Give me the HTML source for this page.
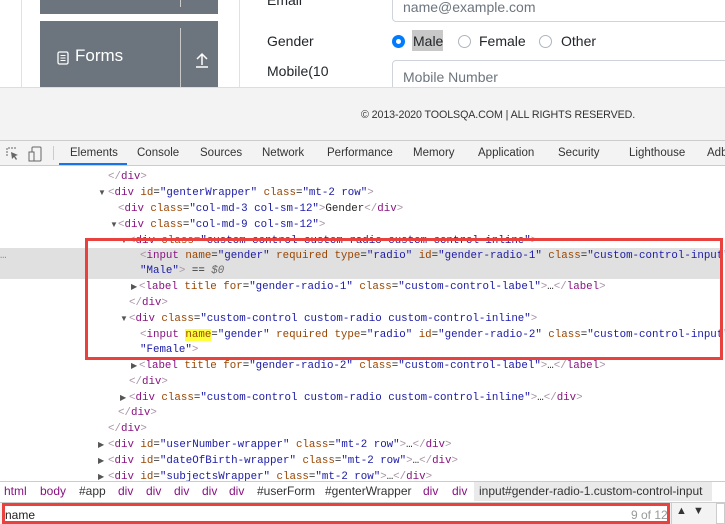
<!DOCTYPE html>
<html><head><meta charset="utf-8"><style>
*{margin:0;padding:0;box-sizing:border-box}
body{width:725px;height:524px;overflow:hidden;background:#fff;position:relative;font-family:"Liberation Sans",sans-serif}
.a{position:absolute;white-space:nowrap}
.code{font-family:"Liberation Mono",monospace;font-size:10.8px;color:#222;line-height:15.75px;margin-top:2px}
.t{color:#881280}.n{color:#994500}.v{color:#1a1aa6}.b{color:#a894a6}
.tri{font-size:8px;color:#555;margin-top:1px}
.tab{font-size:11.5px;color:#333;top:147px}
.bc{font-size:12px;top:484px}
.p{color:#881280}
</style></head><body>
<div class="a" style="left:21px;top:0;width:1px;height:87px;background:#dee2e6"></div>
<div class="a" style="left:239px;top:0;width:1px;height:87px;background:#dee2e6"></div>
<div class="a" style="left:40px;top:0;width:178px;height:14px;background:#6c757d"></div>
<div class="a" style="left:180px;top:0;width:1px;height:7px;background:#ccc"></div>
<div class="a" style="left:40px;top:21px;width:178px;height:66px;background:#6c757d"></div>
<div class="a" style="left:180px;top:28px;width:1px;height:59px;background:#c8c8c8"></div>
<svg class="a" style="left:57px;top:51px" width="12" height="14" viewBox="0 0 12 14"><rect x="1" y="1" width="10" height="12" rx="1.5" fill="none" stroke="#fff" stroke-width="1.3"/><path d="M3.5 4.5h5M3.5 7h5M3.5 9.5h5" stroke="#fff" stroke-width="1"/></svg>
<div class="a" style="left:75px;top:46px;font-size:17px;color:#fff">Forms</div>
<svg class="a" style="left:195px;top:52px" width="14" height="16" viewBox="0 0 14 16"><path d="M7 13V2M2 7l5-5 5 5M1 15h12" stroke="#fff" stroke-width="1.5" fill="none"/></svg>
<div class="a" style="left:392px;top:-10px;width:340px;height:32px;border:1px solid #ced4da;border-radius:4px"></div>
<div class="a" style="left:403px;top:-1px;font-size:14px;color:#6c757d">name@example.com</div>
<div class="a" style="left:267px;top:-8px;font-size:14px;color:#212529">Email</div>
<div class="a" style="left:267px;top:33px;font-size:14px;color:#212529">Gender</div>
<div class="a" style="left:392px;top:35px;width:13px;height:13px;border-radius:50%;background:#007bff"></div>
<div class="a" style="left:396px;top:39px;width:5px;height:5px;border-radius:50%;background:#fff"></div>
<div class="a" style="left:412px;top:30px;width:31px;height:21px;background:#c8c8c8"></div>
<div class="a" style="left:413px;top:33px;font-size:14px;color:#212529">Male</div>
<div class="a" style="left:458px;top:35px;width:13px;height:13px;border-radius:50%;border:1px solid #adb5bd"></div>
<div class="a" style="left:479px;top:33px;font-size:14px;color:#212529">Female</div>
<div class="a" style="left:539px;top:35px;width:13px;height:13px;border-radius:50%;border:1px solid #adb5bd"></div>
<div class="a" style="left:561px;top:33px;font-size:14px;color:#212529">Other</div>
<div class="a" style="left:267px;top:63px;font-size:14px;color:#212529">Mobile(10</div>
<div class="a" style="left:392px;top:60px;width:340px;height:38px;border:1px solid #ced4da;border-radius:4px"></div>
<div class="a" style="left:403px;top:69px;font-size:14px;color:#6c757d">Mobile Number</div>
<div class="a" style="left:0;top:87px;width:725px;height:54px;background:#f3f3f3;border-top:1px solid #ddd;border-bottom:1px solid #ccc"></div>
<div class="a" style="left:361px;top:109px;font-size:10.7px;color:#333;letter-spacing:-0.1px">© 2013-2020 TOOLSQA.COM | ALL RIGHTS RESERVED.</div>
<div class="a" style="left:0;top:141px;width:725px;height:25px;background:#f3f3f3;border-bottom:1px solid #ccc"></div>
<svg class="a" style="left:6px;top:147px" width="14" height="14" viewBox="0 0 14 14"><path d="M10 1H1v9" fill="none" stroke="#666" stroke-dasharray="2 1"/><path d="M5 5l7 3-3 1 2 3-1 1-2-3-2 2z" fill="#666"/></svg>
<svg class="a" style="left:28px;top:146px" width="14" height="16" viewBox="0 0 14 16"><rect x="4" y="1" width="9" height="14" rx="1" fill="none" stroke="#666"/><rect x="1" y="6" width="5" height="9" fill="#f3f3f3" stroke="#666"/></svg>
<div class="a" style="left:53px;top:146px;width:1px;height:14px;background:#ccc"></div>
<div class="a" style="left:59px;top:163px;width:68px;height:2px;background:#1a73e8"></div>
<div class="a tab" style="left:70px">Elements</div>
<div class="a tab" style="left:137px">Console</div>
<div class="a tab" style="left:200px">Sources</div>
<div class="a tab" style="left:262px">Network</div>
<div class="a tab" style="left:327px">Performance</div>
<div class="a tab" style="left:413px">Memory</div>
<div class="a tab" style="left:478px">Application</div>
<div class="a tab" style="left:558px">Security</div>
<div class="a tab" style="left:629px">Lighthouse</div>
<div class="a tab" style="left:707px">Adb</div>
<div class="a" style="left:0;top:248px;width:721px;height:31px;background:#e0e0e0"></div>
<div class="a code" style="left:0;top:247px;color:#888">…</div>
<div class="a code" style="left:108px;top:168px"><span class="b">&lt;/</span><span class="t">div</span><span class="b">&gt;</span></div>
<div class="a tri" style="left:98px;top:187px">▼</div>
<div class="a code" style="left:108px;top:184px"><span class="b">&lt;</span><span class="t">div</span> <span class="n">id</span>=<span class="v">"genterWrapper"</span> <span class="n">class</span>=<span class="v">"mt-2 row"</span><span class="b">&gt;</span></div>
<div class="a code" style="left:118px;top:200px"><span class="b">&lt;</span><span class="t">div</span> <span class="n">class</span>=<span class="v">"col-md-3 col-sm-12"</span><span class="b">&gt;</span>Gender<span class="b">&lt;/</span><span class="t">div</span><span class="b">&gt;</span></div>
<div class="a tri" style="left:110px;top:219px">▼</div>
<div class="a code" style="left:118px;top:216px"><span class="b">&lt;</span><span class="t">div</span> <span class="n">class</span>=<span class="v">"col-md-9 col-sm-12"</span><span class="b">&gt;</span></div>
<div class="a tri" style="left:120px;top:235px">▼</div>
<div class="a code" style="left:129px;top:232px"><span class="b">&lt;</span><span class="t">div</span> <span class="n">class</span>=<span class="v">"custom-control custom-radio custom-control-inline"</span><span class="b">&gt;</span></div>
<div class="a code" style="left:140px;top:247px"><span class="b">&lt;</span><span class="t">input</span> <span class="n">name</span>=<span class="v">"gender"</span> <span class="n">required</span> <span class="n">type</span>=<span class="v">"radio"</span> <span class="n">id</span>=<span class="v">"gender-radio-1"</span> <span class="n">class</span>=<span class="v">"custom-control-input"</span></div>
<div class="a code" style="left:140px;top:262px"><span class="v">"Male"</span><span class="b">&gt;</span> == <i style="color:#666">$0</i></div>
<div class="a tri" style="left:131px;top:281px">▶</div>
<div class="a code" style="left:139px;top:278px"><span class="b">&lt;</span><span class="t">label</span> <span class="n">title</span> <span class="n">for</span>=<span class="v">"gender-radio-1"</span> <span class="n">class</span>=<span class="v">"custom-control-label"</span><span class="b">&gt;</span>…<span class="b">&lt;/</span><span class="t">label</span><span class="b">&gt;</span></div>
<div class="a code" style="left:129px;top:294px"><span class="b">&lt;/</span><span class="t">div</span><span class="b">&gt;</span></div>
<div class="a tri" style="left:120px;top:313px">▼</div>
<div class="a code" style="left:129px;top:310px"><span class="b">&lt;</span><span class="t">div</span> <span class="n">class</span>=<span class="v">"custom-control custom-radio custom-control-inline"</span><span class="b">&gt;</span></div>
<div class="a code" style="left:140px;top:326px"><span class="b">&lt;</span><span class="t">input</span> <span class="n" style="background:#ffff3c">name</span>=<span class="v">"gender"</span> <span class="n">required</span> <span class="n">type</span>=<span class="v">"radio"</span> <span class="n">id</span>=<span class="v">"gender-radio-2"</span> <span class="n">class</span>=<span class="v">"custom-control-input"</span></div>
<div class="a code" style="left:140px;top:341px"><span class="v">"Female"</span><span class="b">&gt;</span></div>
<div class="a tri" style="left:131px;top:360px">▶</div>
<div class="a code" style="left:139px;top:357px"><span class="b">&lt;</span><span class="t">label</span> <span class="n">title</span> <span class="n">for</span>=<span class="v">"gender-radio-2"</span> <span class="n">class</span>=<span class="v">"custom-control-label"</span><span class="b">&gt;</span>…<span class="b">&lt;/</span><span class="t">label</span><span class="b">&gt;</span></div>
<div class="a code" style="left:129px;top:373px"><span class="b">&lt;/</span><span class="t">div</span><span class="b">&gt;</span></div>
<div class="a tri" style="left:120px;top:392px">▶</div>
<div class="a code" style="left:129px;top:389px"><span class="b">&lt;</span><span class="t">div</span> <span class="n">class</span>=<span class="v">"custom-control custom-radio custom-control-inline"</span><span class="b">&gt;</span>…<span class="b">&lt;/</span><span class="t">div</span><span class="b">&gt;</span></div>
<div class="a code" style="left:118px;top:404px"><span class="b">&lt;/</span><span class="t">div</span><span class="b">&gt;</span></div>
<div class="a code" style="left:108px;top:420px"><span class="b">&lt;/</span><span class="t">div</span><span class="b">&gt;</span></div>
<div class="a tri" style="left:98px;top:439px">▶</div>
<div class="a code" style="left:108px;top:436px"><span class="b">&lt;</span><span class="t">div</span> <span class="n">id</span>=<span class="v">"userNumber-wrapper"</span> <span class="n">class</span>=<span class="v">"mt-2 row"</span><span class="b">&gt;</span>…<span class="b">&lt;/</span><span class="t">div</span><span class="b">&gt;</span></div>
<div class="a tri" style="left:98px;top:455px">▶</div>
<div class="a code" style="left:108px;top:452px"><span class="b">&lt;</span><span class="t">div</span> <span class="n">id</span>=<span class="v">"dateOfBirth-wrapper"</span> <span class="n">class</span>=<span class="v">"mt-2 row"</span><span class="b">&gt;</span>…<span class="b">&lt;/</span><span class="t">div</span><span class="b">&gt;</span></div>
<div class="a tri" style="left:98px;top:471px">▶</div>
<div class="a code" style="left:108px;top:468px"><span class="b">&lt;</span><span class="t">div</span> <span class="n">id</span>=<span class="v">"subjectsWrapper"</span> <span class="n">class</span>=<span class="v">"mt-2 row"</span><span class="b">&gt;</span>…<span class="b">&lt;/</span><span class="t">div</span><span class="b">&gt;</span></div>
<div class="a" style="left:85px;top:238px;width:638px;height:122px;border:3px solid #e8413e"></div>
<div class="a" style="left:0;top:481px;width:725px;height:21px;background:#fff;border-top:1px solid #ccc"></div>
<div class="a" style="left:474px;top:482px;width:238px;height:19px;background:#eaeaea"></div>
<div class="a bc p" style="left:4px">html</div>
<div class="a bc p" style="left:40px">body</div>
<div class="a bc" style="left:79px;color:#333">#app</div>
<div class="a bc p" style="left:118px">div</div>
<div class="a bc p" style="left:146px">div</div>
<div class="a bc p" style="left:174px">div</div>
<div class="a bc p" style="left:202px">div</div>
<div class="a bc p" style="left:229px">div</div>
<div class="a bc" style="left:257px;color:#333">#userForm</div>
<div class="a bc" style="left:325px;color:#333">#genterWrapper</div>
<div class="a bc p" style="left:423px">div</div>
<div class="a bc p" style="left:452px">div</div>
<div class="a bc" style="left:479px;color:#333">input#gender-radio-1.custom-control-input</div>
<div class="a" style="left:0;top:502px;width:725px;height:22px;background:#f3f3f3;border-top:1px solid #ccc"></div>
<div class="a" style="left:2px;top:503px;width:668px;height:21px;background:#fff;border:3px solid #e8413e"></div>
<div class="a" style="left:5px;top:508px;font-size:12px;color:#222">name</div>
<div class="a" style="left:631px;top:508px;font-size:12px;color:#999">9 of 12</div>
<div class="a" style="left:671px;top:503px;width:1px;height:21px;background:#ccc"></div>
<div class="a" style="left:676px;top:505px;font-size:11px;color:#333">▲</div>
<div class="a" style="left:693px;top:505px;font-size:11px;color:#333">▼</div>
<div class="a" style="left:716px;top:503px;width:9px;height:21px;background:#fff;border:1px solid #ccc"></div>
</body></html>
